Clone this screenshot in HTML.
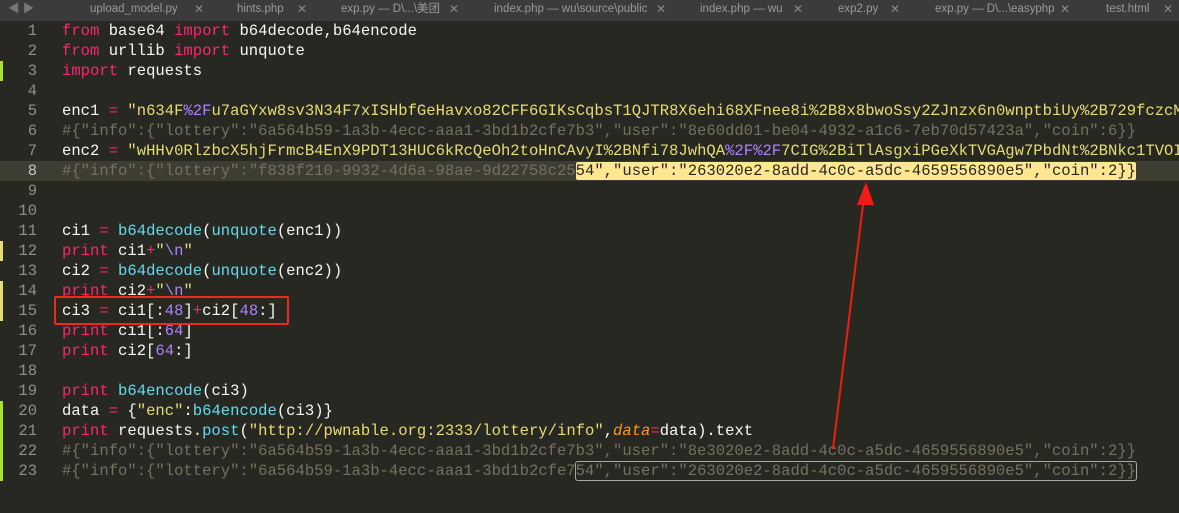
<!DOCTYPE html>
<html><head><meta charset="utf-8"><style>
*{margin:0;padding:0;box-sizing:border-box}
body{width:1179px;height:513px;overflow:hidden;background:#272822;position:relative;font-family:"Liberation Mono",monospace;}
#tabs{position:absolute;left:0;top:0;width:1179px;height:21px;background:#3b3b3b;font-family:"Liberation Sans","Noto Sans CJK SC",sans-serif;font-size:11.5px;color:#9a9a9a}
#tabs span{position:absolute;top:2px;height:16px;line-height:14px;white-space:nowrap;overflow:hidden}
#tabs .x{color:#8a8a8a;font-size:12px}
.ln{position:absolute;left:0;width:37px;text-align:right;color:#8f908a;font-size:15.5px;line-height:20px;margin-top:1px}
.cd{position:absolute;left:62px;width:1117px;white-space:pre;overflow:hidden;font-size:15.57px;line-height:20px;color:#f8f8f2;padding-top:1px;height:21px}
.k{color:#f92672}.s{color:#e6db74}.f{color:#66d9ef}.n{color:#ae81ff}.c{color:#75715e}.a{color:#fd971f;font-style:italic}
.hl{background:#ffe792;color:#272822;border-radius:2px}
.bx{outline:1px solid #a8a8a0;border-radius:2px}
.mk{position:absolute;left:0;width:3px;height:20px}
</style></head><body>
<div id="tabs">
<span style="left:8px;color:#777">◀ ▶</span>
<span style="left:90px">upload_model.py</span><span class="x" style="left:194px">✕</span>
<span style="left:237px">hints.php</span><span class="x" style="left:297px">✕</span>
<span style="left:341px">exp.py — D\...\美团</span><span class="x" style="left:449px">✕</span>
<span style="left:494px">index.php — wu\source\public</span><span class="x" style="left:656px">✕</span>
<span style="left:700px">index.php — wu</span><span class="x" style="left:793px">✕</span>
<span style="left:838px">exp2.py</span><span class="x" style="left:890px">✕</span>
<span style="left:935px">exp.py — D\...\easyphp</span><span class="x" style="left:1060px">✕</span>
<span style="left:1106px">test.html</span><span class="x" style="left:1163px">✕</span>
</div>
<div style="position:absolute;left:0;top:161px;width:1179px;height:20px;background:#3e3d32"></div>
<div class="mk" style="top:61px;background:#a6e22e"></div>
<div class="mk" style="top:241px;background:#e6db74"></div>
<div class="mk" style="top:281px;height:40px;background:#e6db74"></div>
<div class="mk" style="top:401px;height:80px;background:#a6e22e"></div>

<div class="ln" style="top:20px">1</div><div class="cd" style="top:20px"><span class="k">from</span> base64 <span class="k">import</span> b64decode,b64encode</div>
<div class="ln" style="top:40px">2</div><div class="cd" style="top:40px"><span class="k">from</span> urllib <span class="k">import</span> unquote</div>
<div class="ln" style="top:60px">3</div><div class="cd" style="top:60px"><span class="k">import</span> requests</div>
<div class="ln" style="top:80px">4</div>
<div class="ln" style="top:100px">5</div><div class="cd" style="top:100px">enc1 <span class="k">=</span> <span class="s">"n634F<span class="n">%2F</span>u7aGYxw8sv3N34F7xISHbfGeHavxo82CFF6GIKsCqbsT1QJTR8X6ehi68XFnee8i%2B8x8bwoSsy2ZJnzx6n0wnptbiUy%2B729fczcMabc"</span></div>
<div class="ln" style="top:120px">6</div><div class="cd c" style="top:120px">#{"info":{"lottery":"6a564b59-1a3b-4ecc-aaa1-3bd1b2cfe7b3","user":"8e60dd01-be04-4932-a1c6-7eb70d57423a","coin":6}}</div>
<div class="ln" style="top:140px">7</div><div class="cd" style="top:140px">enc2 <span class="k">=</span> <span class="s">"wHHv0RlzbcX5hjFrmcB4EnX9PDT13HUC6kRcQeOh2toHnCAvyI%2BNfi78JwhQA<span class="n">%2F%2F</span>7CIG%2BiTlAsgxiPGeXkTVGAgw7PbdNt%2BNkc1TVOIabc"</span></div>
<div class="ln" style="top:160px;color:#c8c8c0">8</div><div class="cd c" style="top:160px">#{"info":{"lottery":"f838f210-9932-4d6a-98ae-9d22758c25<span class="hl">54","user":"263020e2-8add-4c0c-a5dc-4659556890e5","coin":2}}</span></div>
<div class="ln" style="top:180px">9</div>
<div class="ln" style="top:200px">10</div>
<div class="ln" style="top:220px">11</div><div class="cd" style="top:220px">ci1 <span class="k">=</span> <span class="f">b64decode</span>(<span class="f">unquote</span>(enc1))</div>
<div class="ln" style="top:240px">12</div><div class="cd" style="top:240px"><span class="k">print</span> ci1<span class="k">+</span><span class="s">"<span class="n">\n</span>"</span></div>
<div class="ln" style="top:260px">13</div><div class="cd" style="top:260px">ci2 <span class="k">=</span> <span class="f">b64decode</span>(<span class="f">unquote</span>(enc2))</div>
<div class="ln" style="top:280px">14</div><div class="cd" style="top:280px"><span class="k">print</span> ci2<span class="k">+</span><span class="s">"<span class="n">\n</span>"</span></div>
<div class="ln" style="top:300px">15</div><div class="cd" style="top:300px">ci3 <span class="k">=</span> ci1[:<span class="n">48</span>]<span class="k">+</span>ci2[<span class="n">48</span>:]</div>
<div class="ln" style="top:320px">16</div><div class="cd" style="top:320px"><span class="k">print</span> ci1[:<span class="n">64</span>]</div>
<div class="ln" style="top:340px">17</div><div class="cd" style="top:340px"><span class="k">print</span> ci2[<span class="n">64</span>:]</div>
<div class="ln" style="top:360px">18</div>
<div class="ln" style="top:380px">19</div><div class="cd" style="top:380px"><span class="k">print</span> <span class="f">b64encode</span>(ci3)</div>
<div class="ln" style="top:400px">20</div><div class="cd" style="top:400px">data <span class="k">=</span> {<span class="s">"enc"</span>:<span class="f">b64encode</span>(ci3)}</div>
<div class="ln" style="top:420px">21</div><div class="cd" style="top:420px"><span class="k">print</span> requests.<span class="f">post</span>(<span class="s">"http://pwnable.org:2333/lottery/info"</span>,<span class="a">data</span><span class="k">=</span>data).text</div>
<div class="ln" style="top:440px">22</div><div class="cd c" style="top:440px">#{"info":{"lottery":"6a564b59-1a3b-4ecc-aaa1-3bd1b2cfe7b3","user":"8e3020e2-8add-4c0c-a5dc-4659556890e5","coin":2}}</div>
<div class="ln" style="top:460px">23</div><div class="cd c" style="top:460px">#{"info":{"lottery":"6a564b59-1a3b-4ecc-aaa1-3bd1b2cfe7<span class="bx">54","user":"263020e2-8add-4c0c-a5dc-4659556890e5","coin":2}}</span></div>

<div style="position:absolute;left:54px;top:296px;width:235px;height:29px;border:2px solid #f0281e;border-radius:2px"></div>
<svg style="position:absolute;left:0;top:0" width="1179" height="513">
<polygon points="832,449 834,449 864,205 874,205 866,182 857,205 862,205" fill="#f21c14"/>
</svg>
</body></html>
